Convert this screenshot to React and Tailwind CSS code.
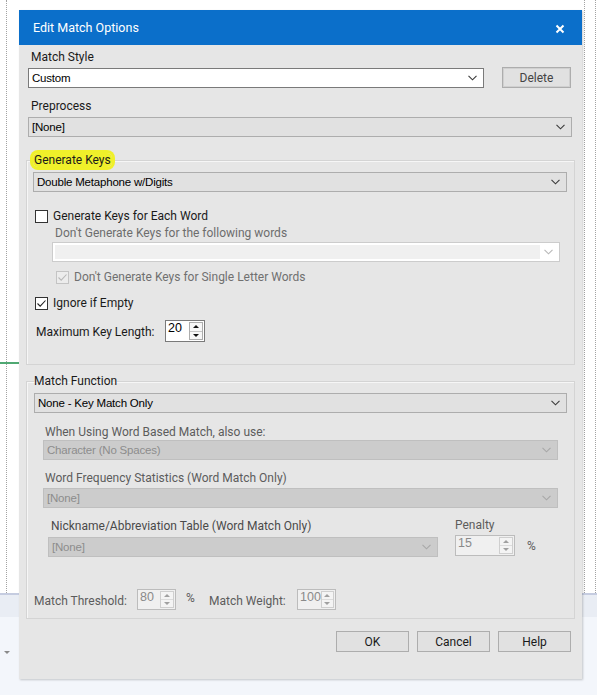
import React from "react";

const Chevron = ({ color = "#3a3a3a" }) => (
  <svg width="9" height="6" viewBox="0 0 9 6">
    <path d="M0.5 0.8 L4.5 4.8 L8.5 0.8" fill="none" stroke={color} strokeWidth="1.1" />
  </svg>
);

const Tri = ({ up, color }) => (
  <svg width="6" height="3" viewBox="0 0 6 3">
    <path d={up ? "M0 3 L3 0 L6 3 Z" : "M0 0 L3 3 L6 0 Z"} fill={color} />
  </svg>
);

const comboStyles = {
  edit: "bg-white border-[#7a7a7a] text-black",
  list: "bg-[#e1e1e1] border-[#adadad] text-black",
  disabled: "bg-[#cccccc] border-[#bfbfbf] text-[#8c8c8c]",
};

function Combo({ value, variant = "list", className = "" }) {
  return (
    <div className={`flex h-[20px] items-center border pl-[3px] pr-[6px] ${comboStyles[variant]} ${className}`}>
      <span className="flex-1 pt-[1px] font-['Liberation_Sans',Arial,sans-serif] text-[11.5px] tracking-[-0.2px]">{value}</span>
      <Chevron color={variant === "disabled" ? "#a8a8a8" : "#3a3a3a"} />
    </div>
  );
}

function CheckBox({ checked, disabled, label }) {
  const stroke = disabled ? "#b8b8b8" : "#222";
  return (
    <div className="flex h-[16px] items-center gap-[5px]">
      <div
        className={`flex h-[13px] w-[13px] items-center justify-center border ${
          disabled ? "border-[#c4c4c4] bg-[#ececec]" : "border-[#333] bg-white"
        }`}
      >
        {checked && (
          <svg width="11" height="11" viewBox="0 0 11 11">
            <path d="M1.5 5.5 L4.2 8.2 L9.5 2.5" fill="none" stroke={stroke} strokeWidth="1.1" />
          </svg>
        )}
      </div>
      <span className={disabled ? "text-[#707070]" : "text-[#1a1a1a]"}>{label}</span>
    </div>
  );
}

function Spin({ value, disabled, className = "" }) {
  const arrow = disabled ? "#a0a0a0" : "#111";
  return (
    <div
      className={`flex border ${
        disabled ? "border-[#bcbcbc] bg-[#f0f0f0] text-[#8a8a8a]" : "border-[#7a7a7a] bg-white text-black"
      } ${className}`}
    >
      <span className="flex-1 pl-[2px] font-['Liberation_Sans',Arial,sans-serif] text-[12.5px] leading-[15px]">
        {value}
      </span>
      <div
        className={`my-[1px] mr-[1px] flex w-[14px] flex-col border ${
          disabled ? "border-[#cfcfcf] bg-[#f4f4f4]" : "border-[#adadad] bg-[#f7f7f7]"
        }`}
      >
        <div className={`flex flex-1 items-center justify-center border-b ${disabled ? "border-[#dcdcdc]" : "border-[#c6c6c6]"}`}>
          <Tri up color={arrow} />
        </div>
        <div className="flex flex-1 items-center justify-center">
          <Tri color={arrow} />
        </div>
      </div>
    </div>
  );
}

const Button = ({ children, className = "" }) => (
  <div
    className={`flex h-[21px] items-center justify-center border border-[#adadad] bg-[#e1e1e1] text-[12px] text-[#1a1a1a] ${className}`}
  >
    {children}
  </div>
);

export default function App() {
  return (
    <div className="relative h-[695px] w-[597px] overflow-hidden bg-white font-['Roboto',sans-serif] text-[12px]">
      {/* spreadsheet behind the dialog */}
      <div className="flex h-[593px] justify-between">
        <div className="flex w-[19px] flex-col">
          <div className="ml-[6px] h-[362px] border-l border-dotted border-[#a3a3a3]" />
          <div className="h-[2px] bg-[#4fa872]" />
          <div className="ml-[6px] flex-1 border-l border-dotted border-[#a3a3a3]" />
        </div>
        <div className="flex w-[15px]">
          <div className="ml-[2px] h-full border-l border-dotted border-[#a3a3a3]" />
          <div className="ml-[10px] h-full border-l border-dotted border-[#a3a3a3]" />
        </div>
      </div>
      <div className="h-[2px] bg-[#c5cce0]" />
      <div className="h-[22px] bg-[#e9edf4]" />
      <div className="h-[78px] bg-[#f3f6fb] pl-[4px] pt-[34px]">
        <Tri color="#8a8a8a" />
      </div>

      {/* dialog window */}
      <div className="absolute left-[19px] top-[10px] flex h-[669px] w-[563px] flex-col bg-[#e6e6e6] shadow-[1px_1px_2px_rgba(0,0,0,0.2)]">
        <div className="flex h-[35px] items-center justify-between bg-[#0b6fca] pl-[14px] pr-[17px] pt-[2px] text-[12.5px] text-white">
          <span>Edit Match Options</span>
          <svg width="10" height="10" viewBox="0 0 10 10">
            <path d="M1.5 1.5 L8.5 8.5 M8.5 1.5 L1.5 8.5" stroke="white" strokeWidth="2" />
          </svg>
        </div>

        <div className="flex flex-col px-[9px] text-[#1a1a1a]">
          <div className="mt-[4px] h-[16px] pl-[3px] leading-[16px]">Match Style</div>
          <div className="mt-[2px] flex h-[21px]">
            <Combo value="Custom" variant="edit" className="mt-[1px] w-[456px]" />
            <Button className="ml-[18px] w-[69px] text-[#444] shadow-[inset_0_0_0_1px_#d0d0d0]">Delete</Button>
          </div>

          <div className="mt-[10px] h-[16px] pl-[3px] leading-[16px]">Preprocess</div>
          <Combo value="[None]" className="mr-[1px] mt-[3px]" />

          {/* Generate Keys */}
          <fieldset className="-mx-[2px] mt-[15px] border border-[#d4d4d4] pb-[22px] pl-[6px] pr-[7px] pt-[4px] shadow-[inset_1px_1px_0_#f6f6f6]">
            <legend className="h-[16px] leading-[16px]">
              <span className="rounded-[5px] bg-[#f0f02a] px-[1px] shadow-[0_0_0_3px_#f0f02a]">Generate Keys</span>
            </legend>
            <Combo value="Double Metaphone w/Digits" />
            <div className="mt-[16px] pl-[2px]">
              <CheckBox label="Generate Keys for Each Word" />
            </div>
            <div className="mt-[1px] h-[16px] pl-[22px] leading-[16px] text-[#6d6d6d]">
              Don't Generate Keys for the following words
            </div>
            <div className="ml-[19px] mr-[7px] mt-[1px] flex h-[20px] border border-[#cccccc] bg-white p-[2px]">
              <div className="flex-1 bg-[#f0f0f0]" />
              <div className="flex w-[17px] items-center justify-center">
                <Chevron color="#b8b8b8" />
              </div>
            </div>
            <div className="mt-[7px] pl-[23px]">
              <CheckBox checked disabled label="Don't Generate Keys for Single Letter Words" />
            </div>
            <div className="mt-[10px] pl-[2px]">
              <CheckBox checked label="Ignore if Empty" />
            </div>
            <div className="mt-[9px] flex h-[22px] items-center">
              <span className="w-[132px] pl-[3px] pt-[1px]">Maximum Key Length:</span>
              <Spin value="20" className="h-[22px] w-[40px]" />
            </div>
          </fieldset>

          {/* Match Function */}
          <fieldset className="-mx-[2px] mt-[8px] border border-[#d4d4d4] pb-[8px] pl-[7px] pr-[7px] pt-[4px] shadow-[inset_1px_1px_0_#f6f6f6]">
            <legend className="h-[16px] leading-[16px]">Match Function</legend>
            <Combo value="None - Key Match Only" />
            <div className="mt-[12px] h-[15px] pl-[11px] leading-[15px] text-[#5c5c5c]">
              When Using Word Based Match, also use:
            </div>
            <Combo value="Character (No Spaces)" variant="disabled" className="mx-[9px]" />
            <div className="mt-[11px] h-[15px] pl-[11px] leading-[15px] text-[#5c5c5c]">
              Word Frequency Statistics (Word Match Only)
            </div>
            <Combo value="[None]" variant="disabled" className="mx-[9px] mt-[2px]" />

            <div className="mt-[10px] flex">
              <div className="ml-[14px] flex w-[390px] flex-col">
                <div className="h-[16px] pl-[3px] leading-[16px] text-[#4a4a4a]">
                  Nickname/Abbreviation Table (Word Match Only)
                </div>
                <Combo value="[None]" variant="disabled" className="mt-[3px]" />
              </div>
              <div className="ml-[17px] flex flex-col">
                <div className="h-[14px] leading-[14px] text-[#5c5c5c]">Penalty</div>
                <div className="mt-[3px] flex items-center">
                  <Spin value="15" disabled className="h-[21px] w-[60px]" />
                  <span className="ml-[12px] text-[#5c5c5c]">%</span>
                </div>
              </div>
            </div>

            <div className="mt-[32px] flex h-[21px] items-center text-[#5c5c5c]">
              <span className="w-[103px] pt-[2px]">Match Threshold:</span>
              <Spin value="80" disabled className="h-[21px] w-[39px]" />
              <span className="ml-[10px] w-[23px] self-start">%</span>
              <span className="w-[88px] pt-[2px]">Match Weight:</span>
              <Spin value="100" disabled className="h-[21px] w-[39px]" />
            </div>
          </fieldset>

          <div className="mt-[12px] flex justify-end gap-[8px] pr-[2px]">
            <Button className="w-[73px]">OK</Button>
            <Button className="w-[73px]">Cancel</Button>
            <Button className="w-[73px]">Help</Button>
          </div>
        </div>
      </div>
    </div>
  );
}
